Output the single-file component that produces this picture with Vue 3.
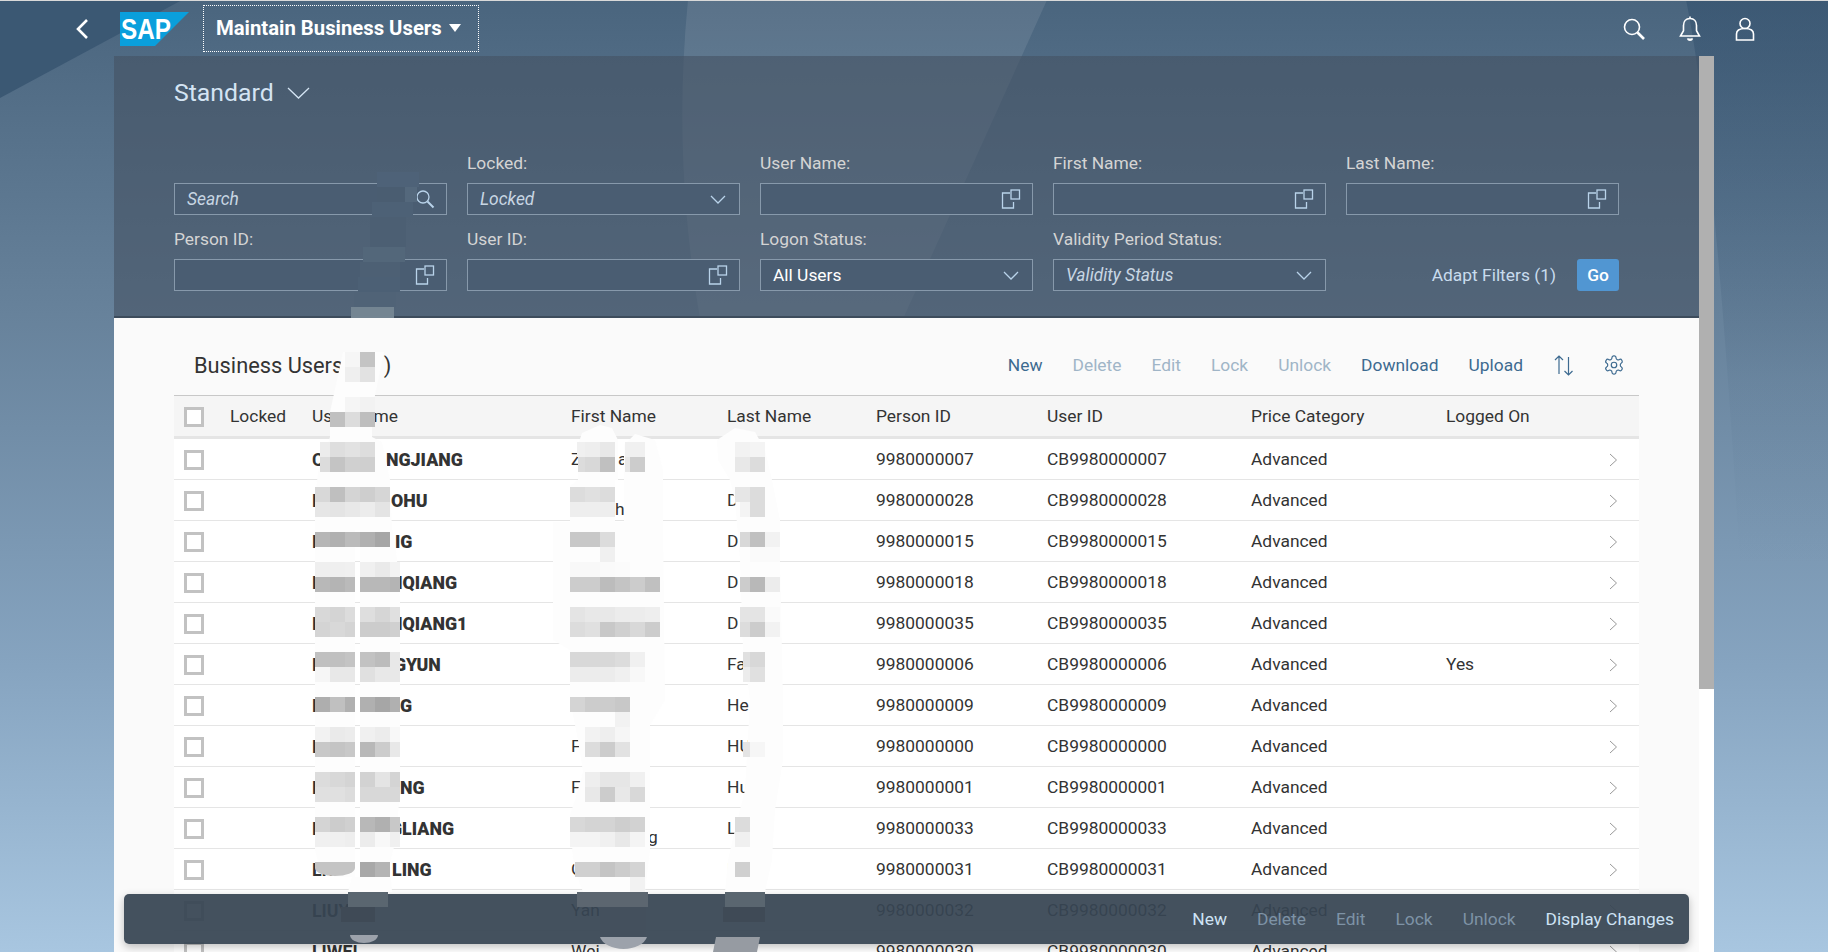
<script setup>
const filters = [
  { label: '', placeholder: 'Search', icon: 'search' },
  { label: 'Locked:', placeholder: 'Locked', icon: 'down' },
  { label: 'User Name:', icon: 'vh' },
  { label: 'First Name:', icon: 'vh' },
  { label: 'Last Name:', icon: 'vh' },
  { label: 'Person ID:', icon: 'vh' },
  { label: 'User ID:', icon: 'vh' },
  { label: 'Logon Status:', value: 'All Users', icon: 'down' },
  { label: 'Validity Period Status:', placeholder: 'Validity Status', icon: 'down' }
]
const columns = ['Locked', 'User Name', 'First Name', 'Last Name', 'Person ID', 'User ID', 'Price Category', 'Logged On']
const rows = [
  ['C', 386, 'NGJIANG', 'Z', '', 'a', '', '007'],
  ['D', 391, 'OHU', '', '', 'hu', 'D', '028'],
  ['D', 395, 'IG', '', '', '', 'D', '015'],
  ['D', 390, 'NQIANG', '', '', '', 'D', '018'],
  ['D', 390, 'NQIANG1', '', '', 'e', 'D', '035'],
  ['F', 394, 'GYUN', '', '', '', 'Fa', '006'],
  ['H', 400, 'G', '', '', '', 'He', '009'],
  ['H', 0, '', 'F', '', '', 'HU', '000'],
  ['H', 400, 'NG', 'F', '', '', 'Hu', '001'],
  ['L', 390, 'GLIANG', '', '', 'g', 'Li', '033'],
  ['LIU', 392, 'LING', 'G', '', '', 'L', '031'],
  ['LIUY', 0, '', 'Yan', '', '', '', '032'],
  ['LIWEI', 0, '', 'Wei', '', '', '', '030']
].map((r, i) => ({
  pre: r[0], sufX: r[1] ? r[1] - 312 : 0, suf: r[2], first: r[3], firstMid: r[5], last: r[6],
  midX: i === 0 ? 47 : i === 1 ? 44 : i === 4 ? 22 : 77,
  person: '9980000' + r[7], user: 'CB9980000' + r[7], logged: i === 5 ? 'Yes' : ''
}))
const tableActions = [
  { t: 'New' }, { t: 'Delete', off: true }, { t: 'Edit', off: true }, { t: 'Lock', off: true },
  { t: 'Unlock', off: true }, { t: 'Download' }, { t: 'Upload' }
]
const footActions = [
  { t: 'New' }, { t: 'Delete', off: true }, { t: 'Edit', off: true }, { t: 'Lock', off: true },
  { t: 'Unlock', off: true }, { t: 'Display Changes' }
]

/* The pixelated redaction smears that lie over the table in the reference */
const brush = [
  '343,352 384,352 372,410 372,437 382,442 390,480 392,530 355,530 355,892 352,877 335,877 320,870 315,850 315,500 318,472 330,437 330,412 337,380',
  '360,530 393,530 397,560 400,600 400,790 396,840 390,862 392,892 348,892 352,877 360,877',
  '578,445 582,433 600,425 612,428 618,440 618,480 615,480 615,522 570,522 570,486 578,480',
  '624,445 635,434 655,440 663,470 663,480 629,480 629,522 624,522',
  '629,480 663,480 663,522 629,522',
  '553,522 663,522 665,700 650,725 650,850 645,892 583,892 575,870 572,850 575,830 570,815 575,800 583,772 578,740 570,700 570,650 553,640',
  '735,428 755,432 765,450 772,480 780,520 780,560 783,700 783,760 775,810 772,860 765,892 725,892 728,860 735,830 745,790 750,700 743,650 740,560 735,500 730,480 718,460 717,440'
]
const gy = k => 352 + 15 * k
const nameTop = [0, 1, 2, 3, 4].map(i => [315 + 15 * i, 15])
const nameX = [[315, 15], [330, 15], [345, 10], [360, 15], [375, 15], [390, 10]]
const firstX = [0, 1, 2, 3, 4, 5].map(i => [570 + 15 * i, 15])
const lastA = [[735, 15], [750, 15], [765, 15]]
const lastB = [[740, 10], [750, 15], [765, 15]]
const lastC = [[743, 7], [750, 15], [765, 15]]
const strips = [
  [nameTop, 0, [, , 'f6', 'c4']],
  [nameTop, 1, [, , 'ef', 'e2']],
  [nameTop, 3, [, , 'f5', 'f2']],
  [nameTop, 4, [, 'c0', 'dc', 'be']],
  [nameTop, 6, [, 'de', 'e2', 'dd']],
  [nameTop, 7, [, 'c4', 'd0', 'cf']],
  [nameTop, 9, ['d8', 'bf', 'd4', 'ce', 'd6']],
  [nameTop, 10, ['e6', 'e4', 'e8', 'ec', 'e4']],
  [nameTop, 12, ['b6', 'b0', 'bb', 'b0', 'a6']],
  [nameX, 14, ['ef', 'ef', 'f0', 'f0', 'ea', 'f3']],
  [nameX, 15, ['b8', 'b4', 'ba', 'b8', 'b8', 'b4']],
  [nameX, 17, ['d8', 'd4', 'dc', 'de', 'd6', 'e0']],
  [nameX, 18, ['d4', 'd8', 'd4', 'cc', 'cc', 'd0']],
  [nameX, 20, ['c0', 'c0', 'c4', 'c2', 'bc', 'e8']],
  [nameX, 21, ['f6', 'e8', 'e8', 'e0', 'e8', 'e8']],
  [nameX, 23, ['ae', 'c0', 'b0', 'b0', 'a6', 'b0']],
  [nameX, 25, ['f2', 'ea', 'ec', 'f0', 'ec', 'f8']],
  [nameX, 26, ['c8', 'c4', 'c8', 'b8', 'cc', 'e8']],
  [nameX, 28, ['dc', 'd8', 'd4', 'd2', 'e4', 'd4']],
  [nameX, 29, ['e0', 'e0', 'dc', 'd8', 'd8', 'd8']],
  [nameX, 31, ['d4', 'cc', 'd0', 'b8', 'b0', 'c8']],
  [nameX, 32, ['f0', 'f0', 'ee', 'ec', 'f8', 'f0']],
  [nameX, 34, [, , , 'a8', 'b4']],
  [firstX, 6, [, 'ee', 'e8', , 'f0']],
  [firstX, 7, [, 'd8', 'c0', , 'cc']],
  [firstX, 9, ['dc', 'e0', 'dc']],
  [firstX, 10, ['ee', 'ee', 'ee']],
  [firstX, 12, ['c8', 'c8', 'dc']],
  [firstX, 13, [, , 'f0']],
  [firstX, 14, ['f8', 'f8', 'fa', 'fb']],
  [firstX, 15, ['cc', 'cc', 'bc', 'c4', 'cc', 'c0']],
  [firstX, 17, ['e4', 'e8', 'e8', 'ec', 'ec', 'ee']],
  [firstX, 18, ['dc', 'e0', 'c8', 'd0', 'd8', 'cc']],
  [firstX, 20, ['d8', 'd8', 'd8', 'dc', 'f0']],
  [firstX, 21, ['ec', 'ec', 'ec', 'f0', 'f8']],
  [firstX, 23, ['d4', 'cc', 'cc', 'c8']],
  [firstX, 24, [, , , 'f2']],
  [firstX, 25, [, 'f2', 'ee', 'f6']],
  [firstX, 26, [, 'dc', 'cc', 'e2']],
  [firstX, 28, [, 'ee', 'e6', 'e6', 'f0']],
  [firstX, 29, [, 'e8', 'cc', 'e8', 'd8']],
  [firstX, 31, ['d8', 'd4', 'd4', 'ce', 'd2']],
  [firstX, 32, ['f4', 'f4', 'f0', 'e8', 'f4']],
  [firstX, 34, [, 'd0', 'c4', 'cc', 'd4']],
  [firstX, 35, [, , , , 'f2']],
  [lastA, 6, ['f2', 'f4']],
  [lastA, 7, ['e8', 'dc']],
  [lastA, 9, ['e6', 'dc']],
  [lastB, 10, ['f4', 'dc']],
  [lastB, 12, ['d8', 'c0', 'f2']],
  [lastB, 13, [, 'fa', 'fa']],
  [lastB, 15, ['cc', 'b8', 'ec']],
  [lastB, 17, ['e4', 'e4', 'fa']],
  [lastB, 18, ['dc', 'cc', 'f2']],
  [lastC, 20, ['e0', 'd8']],
  [lastC, 21, ['ec', 'e0']],
  [lastC, 26, ['e4', 'f6']],
  [lastA, 31, ['dc']],
  [lastA, 32, ['f0']],
  [lastA, 34, ['d0']]
]
const cells = []
strips.forEach(([xs, k, colors], s) => {
  xs.forEach(([x, w], i) => {
    const c = colors[i]
    if (!c) return
    cells.push({ id: s + '-' + i, x, y: gy(k), w, h: 15, fill: '#' + c + c + c })
  })
})
const extras = [
  { x: 320, y: 442, w: 10, h: 15, fill: '#ececec' },
  { x: 320, y: 457, w: 10, h: 15, fill: '#dcdcdc' },
  { x: 577, y: 442, w: 8, h: 15, fill: '#f0f0f0' },
  { x: 578, y: 457, w: 7, h: 15, fill: '#dcdcdc' },
  { x: 575, y: 862, w: 10, h: 15, fill: '#d0d0d0' },
  { x: 625, y: 442, w: 20, h: 15, fill: '#f0f0f0' },
  { x: 625, y: 457, w: 5, h: 15, fill: '#e8e8e8' },
  { x: 348, y: 892, w: 40, h: 15, fill: '#5a6670' },
  { x: 341, y: 907, w: 34, h: 15, fill: '#3f4a56' },
  { x: 577, y: 892, w: 71, h: 15, fill: '#5c6670' },
  { x: 600, y: 907, w: 46, h: 30, fill: '#44505d' },
  { x: 725, y: 892, w: 40, h: 15, fill: '#5a6670' },
  { x: 723, y: 907, w: 42, h: 15, fill: '#3f4a56' },
  { x: 377, y: 172, w: 42, h: 15, fill: '#4e6278' },
  { x: 377, y: 187, w: 28, h: 15, fill: '#4a5d71' },
  { x: 405, y: 187, w: 12, h: 15, fill: '#54687c' },
  { x: 372, y: 202, w: 41, h: 15, fill: '#4d6176' },
  { x: 370, y: 217, w: 36, h: 30, fill: '#4c5f73' },
  { x: 363, y: 247, w: 42, h: 15, fill: '#53677a' },
  { x: 360, y: 262, w: 40, h: 15, fill: '#4d6074' },
  { x: 358, y: 277, w: 42, h: 15, fill: '#4c6075' },
  { x: 354, y: 292, w: 42, h: 15, fill: '#506377' },
  { x: 351, y: 307, w: 43, h: 11, fill: '#748592' }
]
</script>

<template>
  <div class="app">
    <svg class="backdrop" width="1828" height="952" viewBox="0 0 1828 952" aria-hidden="true">
      <defs>
        <linearGradient id="sky" x1="0" y1="0" x2="0" y2="1">
          <stop offset="0" stop-color="#4a657e" />
          <stop offset="0.33" stop-color="#67829b" />
          <stop offset="0.7" stop-color="#86a4c0" />
          <stop offset="1" stop-color="#a8c6e0" />
        </linearGradient>
        <linearGradient id="fade" x1="0" y1="0" x2="0" y2="1">
          <stop offset="0" stop-color="#2c4a68" stop-opacity="0.45" />
          <stop offset="0.4" stop-color="#2c4a68" stop-opacity="0.06" />
          <stop offset="0.6" stop-color="#2c4a68" stop-opacity="0" />
        </linearGradient>
      </defs>
      <rect width="1828" height="952" fill="url(#sky)" />
      <polygon points="0,0 182,0 0,98" fill="#3b5873" />
      <path d="M1686 0 C1715 140 1740 500 1760 952 L1828 952 L1828 0 Z" fill="url(#fade)" />
      <path d="M688 0 C676 120 684 230 702 330 L898 330 L1047 0 Z" fill="#ffffff" opacity="0.09" />
    </svg>

    <header class="shell">
      <svg class="back" width="14" height="22" viewBox="0 0 14 22"><polyline points="12,2 3,11 12,20" /></svg>
      <svg class="logo" width="69" height="34" viewBox="0 0 69 34">
        <polygon points="0,0 69,0 35,34 0,34" fill="#0a9fdc" />
        <text x="1" y="27" textLength="50" lengthAdjust="spacingAndGlyphs" class="logo-text">SAP</text>
      </svg>
      <button class="title">
        <span>Maintain Business Users</span>
        <i class="caret"></i>
      </button>
      <div class="shell-icons">
        <svg width="24" height="24" viewBox="0 0 24 24"><circle cx="10" cy="10" r="7.5" /><line x1="15.5" y1="15.5" x2="22" y2="22" stroke-width="2.6" /></svg>
        <svg width="24" height="26" viewBox="0 0 24 26"><path d="M12 2.5c-4.2 0-6.5 3-6.5 7v5.2L2.5 20h19l-3-5.3V9.500c0-4-2.300-7-6.500-7z" /><path d="M9.500 22.500a2.700 2.700 0 0 0 5 0" fill="#fff" /><line x1="12" y1="0.5" x2="12" y2="2.500" /></svg>
        <svg width="22" height="24" viewBox="0 0 22 24"><circle cx="11" cy="6.500" r="5" /><path d="M2.500 23v-6c0-3.500 3-5.500 8.500-5.500s8.500 2 8.500 5.500v6z" /></svg>
      </div>
    </header>

    <main class="stage">
      <div class="page">
        <section class="filterbar">
          <div class="variant">
            <span>Standard</span>
            <svg width="23" height="12" viewBox="0 0 23 12"><polyline points="1,1 11.500,11 22,1" /></svg>
          </div>
          <div class="filter-grid">
            <label v-for="f in filters" :key="f.label + f.icon + f.placeholder" class="filter">
              <span class="filter-label">{{ f.label }}</span>
              <span class="field">
                <span v-if="f.placeholder" class="placeholder">{{ f.placeholder }}</span>
                <span v-else-if="f.value" class="value">{{ f.value }}</span>
                <svg v-if="f.icon === 'search'" class="field-icon" width="20" height="20" viewBox="0 0 20 20"><circle cx="8" cy="8" r="6" /><line x1="12.500" y1="12.500" x2="18.500" y2="18.500" stroke-width="2" /></svg>
                <svg v-else-if="f.icon === 'vh'" class="field-icon" width="20" height="20" viewBox="0 0 20 20"><path d="M9 4H1.500v15h11v-6" /><rect x="10" y="1" width="8.500" height="9" /></svg>
                <svg v-else class="field-icon" width="20" height="20" viewBox="0 0 20 20"><polyline points="3,7 10,14 17,7" /></svg>
              </span>
            </label>
            <div class="filter-actions">
              <span class="adapt">Adapt Filters (1)</span>
              <button class="go">Go</button>
            </div>
          </div>
        </section>

        <section class="content">
          <div class="table-toolbar">
            <h2>Business Users <span class="count">)</span></h2>
            <nav class="actions">
              <a v-for="a in tableActions" :key="a.t" :class="{ off: a.off }">{{ a.t }}</a>
              <svg class="tool-icon sort" width="22" height="22" viewBox="0 0 22 22"><path d="M6 20V2M2 6l4-4 4 4M15.500 3v18M11.500 17l4 4 4-4" /></svg>
              <svg class="tool-icon gear" width="22" height="22" viewBox="0 0 24 24"><path d="M12.220 2h-.44a2 2 0 0 0-2 2v.18a2 2 0 0 1-1 1.730l-.43.25a2 2 0 0 1-2 0l-.15-.08a2 2 0 0 0-2.730.73l-.22.38a2 2 0 0 0 .73 2.730l.15.1a2 2 0 0 1 1 1.720v.51a2 2 0 0 1-1 1.740l-.15.09a2 2 0 0 0-.73 2.730l.22.38a2 2 0 0 0 2.730.73l.15-.08a2 2 0 0 1 2 0l.43.25a2 2 0 0 1 1 1.730V20a2 2 0 0 0 2 2h.44a2 2 0 0 0 2-2v-.18a2 2 0 0 1 1-1.730l.43-.25a2 2 0 0 1 2 0l.15.08a2 2 0 0 0 2.730-.73l.22-.39a2 2 0 0 0-.73-2.730l-.15-.08a2 2 0 0 1-1-1.740v-.5a2 2 0 0 1 1-1.740l.15-.09a2 2 0 0 0 .73-2.730l-.22-.38a2 2 0 0 0-2.730-.73l-.15.08a2 2 0 0 1-2 0l-.43-.25a2 2 0 0 1-1-1.730V4a2 2 0 0 0-2-2z" /><circle cx="12" cy="12" r="3" /></svg>
            </nav>
          </div>

          <div class="table">
            <div class="tr head">
              <span class="check"><i></i></span>
              <span v-for="c in columns" :key="c">{{ c }}</span>
              <span></span>
            </div>
            <div v-for="r in rows" :key="r.person" class="tr">
              <span class="check"><i></i></span>
              <span></span>
              <span class="name">{{ r.pre }}<b :style="{ left: r.sufX + 'px' }">{{ r.suf }}</b></span>
              <span class="name-light">{{ r.first }}<em :style="{ left: r.midX + 'px' }">{{ r.firstMid }}</em></span>
              <span>{{ r.last }}</span>
              <span>{{ r.person }}</span>
              <span>{{ r.user }}</span>
              <span>Advanced</span>
              <span>{{ r.logged }}</span>
              <span class="nav"><svg width="9" height="14" viewBox="0 0 9 14"><polyline points="1,1 7.500,7 1,13" /></svg></span>
            </div>
          </div>
        </section>
      </div>
      <div class="scrollbar"><div class="thumb"></div></div>
    </main>

    <footer class="footer-bar">
      <a v-for="a in footActions" :key="a.t" :class="{ off: a.off }">{{ a.t }}</a>
    </footer>

    <svg class="smear" width="1828" height="952" viewBox="0 0 1828 952" aria-hidden="true">
      <polygon v-for="p in brush" :key="p" :points="p" fill="#fdfdfd" />
      <rect v-for="c in cells" :key="c.id" :x="c.x" :y="c.y" :width="c.w" :height="c.h" :fill="c.fill" />
      <rect v-for="c in extras" :key="c.x + '-' + c.y" :x="c.x" :y="c.y" :width="c.w" :height="c.h" :fill="c.fill" />
      <path d="M315 862H355V868A20 8 0 0 1 315 868Z" fill="#c4c4c4" />
      <path d="M350 935H378A14 8 0 0 1 350 935Z" fill="#9ca2ab" />
      <path d="M600 937H647A24 15 0 0 1 600 937Z" fill="#9ca2ab" />
      <polygon points="716,937 760,937 757,952 713,952" fill="#969ba2" />
    </svg>
  </div>
</template>

<style scoped>
.app {
  position: relative;
  width: 1828px;
  height: 952px;
  overflow: hidden;
  font-family: Roboto, "Liberation Sans", sans-serif;
  font-size: 17.4px;
  color: #333;
  border-top: 1px solid #d9d9d9;
  box-sizing: border-box;
}
.backdrop, .smear { position: absolute; left: 0; top: -1px; }
.smear { pointer-events: none; }

.shell {
  position: relative;
  display: flex;
  align-items: center;
  height: 55px;
  padding-left: 75px;
  padding-right: 72px;
}
.back { margin-right: 31px; }
.back polyline { fill: none; stroke: #fff; stroke-width: 2.600; }
.logo { margin-right: 14px; flex: none; }
.logo-text { font: bold 29px "Liberation Sans", sans-serif; fill: #fff; }
.title {
  display: flex;
  align-items: center;
  gap: 7px;
  width: 276px;
  height: 47px;
  padding: 0 0 2px 12px;
  background: none;
  border: 1px dotted #fff;
  color: #fff;
  font: 700 20.3px Roboto, sans-serif;
  white-space: nowrap;
  box-sizing: border-box;
}
.caret {
  width: 0;
  height: 0;
  border-left: 6px solid transparent;
  border-right: 6px solid transparent;
  border-top: 8px solid #fff;
}
.shell-icons { margin-left: auto; display: flex; align-items: center; gap: 32px; }
.shell-icons svg { fill: none; stroke: #fff; stroke-width: 1.600; }

.stage {
  position: relative;
  display: flex;
  width: 1600px;
  height: 896px;
  margin-left: 114px;
  overflow: hidden;
}
.page { width: 1585px; flex: none; }
.scrollbar { width: 15px; background: #fff; flex: none; }
.thumb { height: 633px; background: #b0b0b0; }

.filterbar {
  height: 262px;
  box-sizing: border-box;
  padding: 0 60px 0;
  background: rgba(68, 82, 98, .6);
  border-bottom: 2px solid #3d4c5c;
  box-shadow: 0 1px 0 #b8c0c8;
}
.variant {
  display: flex;
  align-items: center;
  gap: 13px;
  height: 73px;
  color: #d4e4f3;
  font-size: 24.8px;
}
.variant svg { fill: none; stroke: #d4e4f3; stroke-width: 1.300; }
.filter-grid {
  display: grid;
  grid-template-columns: repeat(5, 273px);
  column-gap: 20px;
  row-gap: 13px;
  padding-top: 23px;
}
.filter { display: flex; flex-direction: column; gap: 5px; }
.filter-label { height: 26px; line-height: 22px; color: #d4d4d4; }
.field {
  display: flex;
  align-items: center;
  justify-content: space-between;
  height: 32px;
  box-sizing: border-box;
  padding: 0 11px 0 12px;
  border: 1px solid #8799ab;
  background: #4a5d72;
}
.placeholder { font-style: italic; color: #c8d6e3; }
.value { color: #fff; }
.field-icon { margin-left: auto; fill: none; stroke: #b9d3ea; stroke-width: 1.300; flex: none; }
.filter-actions {
  display: flex;
  align-items: center;
  justify-content: flex-end;
  gap: 21px;
  align-self: end;
  height: 32px;
}
.adapt { color: #c9dcee; }
.go {
  width: 42px;
  height: 32px;
  border: none;
  padding: 0;
  border-radius: 3px;
  background: #5196d2;
  color: #fff;
  font: 500 17.4px Roboto, sans-serif;
}

.content { background: #fafafa; height: 634px; padding: 0 60px; }
.table-toolbar {
  display: flex;
  align-items: center;
  justify-content: space-between;
  height: 77px;
  box-sizing: border-box;
  padding: 17px 14px 0 20px;
}
.table-toolbar h2 { margin: 0; font-size: 21.8px; font-weight: 400; color: #333; white-space: nowrap; }
.count { margin-left: 35px; }
.actions { display: flex; align-items: center; gap: 30px; color: #3d6a90; }
.actions a.off { color: #a0b5c7; }
.tool-icon { fill: none; stroke: #3d6a90; stroke-width: 1.200; flex: none; }
.sort { margin-right: -2px; }
.gear { stroke-width: 1.300; }

.table { border-top: 1px solid #c8c8c8; }
.tr {
  display: grid;
  grid-template-columns: 56px 82px 259px 156px 149px 171px 204px 195px 120px 1fr;
  align-items: center;
  height: 41px;
  box-sizing: border-box;
  padding-top: 1px;
  background: #fff;
  border-bottom: 1px solid #e5e5e5;
  line-height: 1;
  white-space: nowrap;
}
.head { height: 43px; background: #f5f5f5; border-bottom-width: 3px; }
.check { padding-left: 10px; display: flex; }
.check i {
  display: block;
  width: 20px;
  height: 20px;
  box-sizing: border-box;
  border: 3px solid #c2c2c2;
  background: #fff;
}
.name { position: relative; font-weight: 700; font-size: 17.8px; }
.name b { position: absolute; top: 0; }
.name-light { position: relative; }
.name-light em { position: absolute; top: 0; font-style: normal; }
.nav { display: flex; justify-content: flex-end; padding-right: 21px; }
.nav svg { fill: none; stroke: #999; stroke-width: 1; }

.footer-bar {
  position: absolute;
  left: 124px;
  top: 893px;
  width: 1565px;
  height: 50px;
  box-sizing: border-box;
  display: flex;
  align-items: center;
  justify-content: flex-end;
  gap: 30px;
  padding-right: 15px;
  border-radius: 5px;
  background: rgba(55, 69, 83, .935);
  box-shadow: 0 3px 8px rgba(0, 0, 0, .25);
  color: #cfe3f5;
}
.footer-bar a.off { color: #7e93a6; }
</style>
